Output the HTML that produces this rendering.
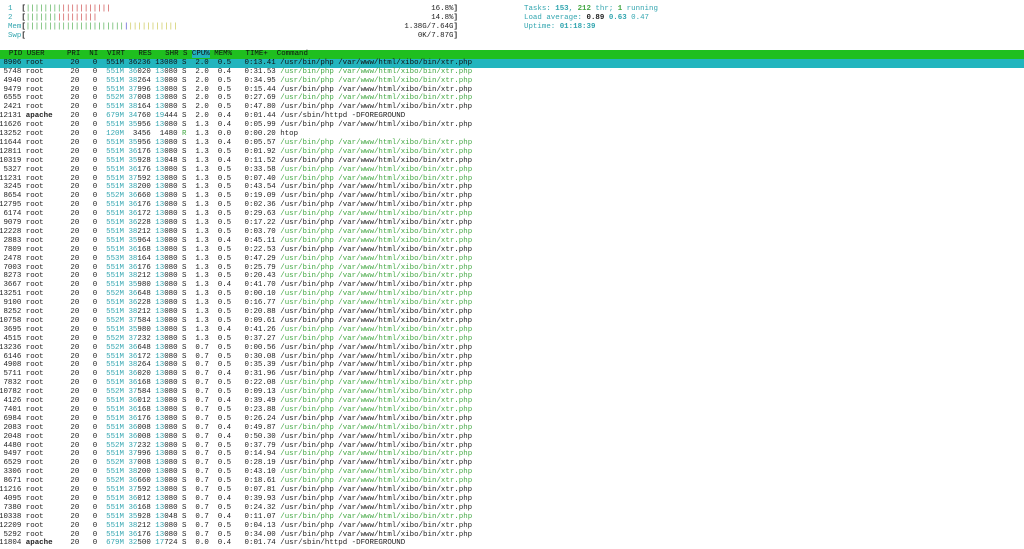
<!DOCTYPE html>
<html><head><meta charset="utf-8"><style>
html,body{margin:0;padding:0;background:#fff;width:1024px;height:549px;overflow:hidden}
body{font-family:"Liberation Mono",monospace;font-size:7.45px;color:#222;position:relative}
.l{position:absolute;left:-1px;height:8.91px;line-height:8.91px;white-space:pre;width:1026px}
.c{color:#33a6b0}.g{color:#45a845}.r{color:#c83a3a}.bl{color:#3a3ac8}.y{color:#c8c44a}.b{font-weight:bold}
.m{width:459px}.v{float:right}
.hd{background:#1fbf1f;color:#111}.hc{background:#22b3bd}
.sel{background:#22b5be;color:#111}
#rows .l{}
</style></head><body>
<div class="l m" style="top:5.4px">  <span class="c">1</span>  <span class="b">[</span><span class="g">||||||||</span><span class="r">|||||||||||</span><span class="v">16.8%<span class="b">]</span></span></div>
<div class="l m" style="top:14.3px">  <span class="c">2</span>  <span class="b">[</span><span class="g">|||||||</span><span class="r">|||||||||</span><span class="v">14.8%<span class="b">]</span></span></div>
<div class="l m" style="top:23.2px">  <span class="c">Mem</span><span class="b">[</span><span class="g">||||||||||||||||||||||</span><span class="bl">|</span><span class="y">|||||||||||</span><span class="v">1.38G/7.64G<span class="b">]</span></span></div>
<div class="l m" style="top:32.1px">  <span class="c">Swp</span><span class="b">[</span><span class="v">0K/7.87G<span class="b">]</span></span></div>
<div class="l" style="top:5.4px;left:524px;width:400px"><span class="c">Tasks: </span><span class="c b">153</span><span class="c">, </span><span class="g b">212</span><span class="c"> thr; </span><span class="g b">1</span><span class="c"> running</span></div>
<div class="l" style="top:14.3px;left:524px;width:400px"><span class="c">Load average: </span><span class="b">0.89 </span><span class="c b">0.63 </span><span class="c">0.47</span></div>
<div class="l" style="top:23.2px;left:524px;width:400px"><span class="c">Uptime: </span><span class="c b">01:18:39</span></div>
<div class="l hd" style="top:49.9px;left:0">  PID USER     PRI  NI  VIRT   RES   SHR S <span class="hc">CPU%</span> MEM%   TIME+  Command</div>
<div id="rows">
<div class="l sel" style="top:58.8px"> 8906 root      20   0  551M 36236 13080 S  2.0  0.5   0:13.41 /usr/bin/php /var/www/html/xibo/bin/xtr.php</div>
<div class="l" style="top:67.7px"> 5748 root      20   0  <span class="c">551M</span> <span class="c">36</span>020 <span class="c">13</span>080 S  2.0  0.4   0:31.53 <span class="g">/usr/bin/php /var/www/html/xibo/bin/xtr.php</span></div>
<div class="l" style="top:76.6px"> 4940 root      20   0  <span class="c">551M</span> <span class="c">38</span>264 <span class="c">13</span>080 S  2.0  0.5   0:34.95 <span class="g">/usr/bin/php /var/www/html/xibo/bin/xtr.php</span></div>
<div class="l" style="top:85.5px"> 9479 root      20   0  <span class="c">551M</span> <span class="c">37</span>996 <span class="c">13</span>080 S  2.0  0.5   0:15.44 /usr/bin/php /var/www/html/xibo/bin/xtr.php</div>
<div class="l" style="top:94.4px"> 6555 root      20   0  <span class="c">552M</span> <span class="c">37</span>008 <span class="c">13</span>080 S  2.0  0.5   0:27.69 <span class="g">/usr/bin/php /var/www/html/xibo/bin/xtr.php</span></div>
<div class="l" style="top:103.3px"> 2421 root      20   0  <span class="c">551M</span> <span class="c">38</span>164 <span class="c">13</span>080 S  2.0  0.5   0:47.80 /usr/bin/php /var/www/html/xibo/bin/xtr.php</div>
<div class="l" style="top:112.2px">12131 <span class="b">apache</span>    20   0  <span class="c">679M</span> <span class="c">34</span>760 <span class="c">19</span>444 S  2.0  0.4   0:01.44 /usr/sbin/httpd -DFOREGROUND</div>
<div class="l" style="top:121.1px">11626 root      20   0  <span class="c">551M</span> <span class="c">35</span>956 <span class="c">13</span>080 S  1.3  0.4   0:05.99 /usr/bin/php /var/www/html/xibo/bin/xtr.php</div>
<div class="l" style="top:130.0px">13252 root      20   0  <span class="c">120M</span>  3456  1480 <span class="g">R</span>  1.3  0.0   0:00.20 htop</div>
<div class="l" style="top:138.9px">11644 root      20   0  <span class="c">551M</span> <span class="c">35</span>956 <span class="c">13</span>080 S  1.3  0.4   0:05.57 <span class="g">/usr/bin/php /var/www/html/xibo/bin/xtr.php</span></div>
<div class="l" style="top:147.8px">12811 root      20   0  <span class="c">551M</span> <span class="c">36</span>176 <span class="c">13</span>080 S  1.3  0.5   0:01.92 <span class="g">/usr/bin/php /var/www/html/xibo/bin/xtr.php</span></div>
<div class="l" style="top:156.7px">10319 root      20   0  <span class="c">551M</span> <span class="c">35</span>928 <span class="c">13</span>048 S  1.3  0.4   0:11.52 /usr/bin/php /var/www/html/xibo/bin/xtr.php</div>
<div class="l" style="top:165.6px"> 5327 root      20   0  <span class="c">551M</span> <span class="c">36</span>176 <span class="c">13</span>080 S  1.3  0.5   0:33.58 <span class="g">/usr/bin/php /var/www/html/xibo/bin/xtr.php</span></div>
<div class="l" style="top:174.5px">11231 root      20   0  <span class="c">551M</span> <span class="c">37</span>592 <span class="c">13</span>080 S  1.3  0.5   0:07.40 <span class="g">/usr/bin/php /var/www/html/xibo/bin/xtr.php</span></div>
<div class="l" style="top:183.4px"> 3245 root      20   0  <span class="c">551M</span> <span class="c">38</span>200 <span class="c">13</span>080 S  1.3  0.5   0:43.54 /usr/bin/php /var/www/html/xibo/bin/xtr.php</div>
<div class="l" style="top:192.3px"> 8654 root      20   0  <span class="c">552M</span> <span class="c">36</span>660 <span class="c">13</span>080 S  1.3  0.5   0:19.09 /usr/bin/php /var/www/html/xibo/bin/xtr.php</div>
<div class="l" style="top:201.2px">12795 root      20   0  <span class="c">551M</span> <span class="c">36</span>176 <span class="c">13</span>080 S  1.3  0.5   0:02.36 /usr/bin/php /var/www/html/xibo/bin/xtr.php</div>
<div class="l" style="top:210.1px"> 6174 root      20   0  <span class="c">551M</span> <span class="c">36</span>172 <span class="c">13</span>080 S  1.3  0.5   0:29.63 <span class="g">/usr/bin/php /var/www/html/xibo/bin/xtr.php</span></div>
<div class="l" style="top:219.0px"> 9079 root      20   0  <span class="c">551M</span> <span class="c">36</span>228 <span class="c">13</span>080 S  1.3  0.5   0:17.22 /usr/bin/php /var/www/html/xibo/bin/xtr.php</div>
<div class="l" style="top:227.9px">12228 root      20   0  <span class="c">551M</span> <span class="c">38</span>212 <span class="c">13</span>080 S  1.3  0.5   0:03.70 <span class="g">/usr/bin/php /var/www/html/xibo/bin/xtr.php</span></div>
<div class="l" style="top:236.8px"> 2883 root      20   0  <span class="c">551M</span> <span class="c">35</span>964 <span class="c">13</span>080 S  1.3  0.4   0:45.11 <span class="g">/usr/bin/php /var/www/html/xibo/bin/xtr.php</span></div>
<div class="l" style="top:245.7px"> 7809 root      20   0  <span class="c">551M</span> <span class="c">36</span>168 <span class="c">13</span>080 S  1.3  0.5   0:22.53 /usr/bin/php /var/www/html/xibo/bin/xtr.php</div>
<div class="l" style="top:254.6px"> 2478 root      20   0  <span class="c">553M</span> <span class="c">38</span>164 <span class="c">13</span>080 S  1.3  0.5   0:47.29 <span class="g">/usr/bin/php /var/www/html/xibo/bin/xtr.php</span></div>
<div class="l" style="top:263.5px"> 7003 root      20   0  <span class="c">551M</span> <span class="c">36</span>176 <span class="c">13</span>080 S  1.3  0.5   0:25.79 <span class="g">/usr/bin/php /var/www/html/xibo/bin/xtr.php</span></div>
<div class="l" style="top:272.4px"> 8273 root      20   0  <span class="c">551M</span> <span class="c">38</span>212 <span class="c">13</span>080 S  1.3  0.5   0:20.43 <span class="g">/usr/bin/php /var/www/html/xibo/bin/xtr.php</span></div>
<div class="l" style="top:281.3px"> 3667 root      20   0  <span class="c">551M</span> <span class="c">35</span>980 <span class="c">13</span>080 S  1.3  0.4   0:41.70 /usr/bin/php /var/www/html/xibo/bin/xtr.php</div>
<div class="l" style="top:290.2px">13251 root      20   0  <span class="c">552M</span> <span class="c">36</span>648 <span class="c">13</span>080 S  1.3  0.5   0:00.10 <span class="g">/usr/bin/php /var/www/html/xibo/bin/xtr.php</span></div>
<div class="l" style="top:299.1px"> 9100 root      20   0  <span class="c">551M</span> <span class="c">36</span>228 <span class="c">13</span>080 S  1.3  0.5   0:16.77 <span class="g">/usr/bin/php /var/www/html/xibo/bin/xtr.php</span></div>
<div class="l" style="top:308.0px"> 8252 root      20   0  <span class="c">551M</span> <span class="c">38</span>212 <span class="c">13</span>080 S  1.3  0.5   0:20.88 /usr/bin/php /var/www/html/xibo/bin/xtr.php</div>
<div class="l" style="top:316.9px">10758 root      20   0  <span class="c">552M</span> <span class="c">37</span>584 <span class="c">13</span>080 S  1.3  0.5   0:09.61 /usr/bin/php /var/www/html/xibo/bin/xtr.php</div>
<div class="l" style="top:325.8px"> 3695 root      20   0  <span class="c">551M</span> <span class="c">35</span>980 <span class="c">13</span>080 S  1.3  0.4   0:41.26 <span class="g">/usr/bin/php /var/www/html/xibo/bin/xtr.php</span></div>
<div class="l" style="top:334.7px"> 4515 root      20   0  <span class="c">552M</span> <span class="c">37</span>232 <span class="c">13</span>080 S  1.3  0.5   0:37.27 <span class="g">/usr/bin/php /var/www/html/xibo/bin/xtr.php</span></div>
<div class="l" style="top:343.6px">13236 root      20   0  <span class="c">552M</span> <span class="c">36</span>648 <span class="c">13</span>080 S  0.7  0.5   0:00.56 /usr/bin/php /var/www/html/xibo/bin/xtr.php</div>
<div class="l" style="top:352.5px"> 6146 root      20   0  <span class="c">551M</span> <span class="c">36</span>172 <span class="c">13</span>080 S  0.7  0.5   0:30.08 /usr/bin/php /var/www/html/xibo/bin/xtr.php</div>
<div class="l" style="top:361.4px"> 4908 root      20   0  <span class="c">551M</span> <span class="c">38</span>264 <span class="c">13</span>080 S  0.7  0.5   0:35.39 /usr/bin/php /var/www/html/xibo/bin/xtr.php</div>
<div class="l" style="top:370.3px"> 5711 root      20   0  <span class="c">551M</span> <span class="c">36</span>020 <span class="c">13</span>080 S  0.7  0.4   0:31.96 /usr/bin/php /var/www/html/xibo/bin/xtr.php</div>
<div class="l" style="top:379.2px"> 7832 root      20   0  <span class="c">551M</span> <span class="c">36</span>168 <span class="c">13</span>080 S  0.7  0.5   0:22.08 <span class="g">/usr/bin/php /var/www/html/xibo/bin/xtr.php</span></div>
<div class="l" style="top:388.1px">10782 root      20   0  <span class="c">552M</span> <span class="c">37</span>584 <span class="c">13</span>080 S  0.7  0.5   0:09.13 <span class="g">/usr/bin/php /var/www/html/xibo/bin/xtr.php</span></div>
<div class="l" style="top:397.0px"> 4126 root      20   0  <span class="c">551M</span> <span class="c">36</span>012 <span class="c">13</span>080 S  0.7  0.4   0:39.49 <span class="g">/usr/bin/php /var/www/html/xibo/bin/xtr.php</span></div>
<div class="l" style="top:405.9px"> 7401 root      20   0  <span class="c">551M</span> <span class="c">36</span>168 <span class="c">13</span>080 S  0.7  0.5   0:23.88 <span class="g">/usr/bin/php /var/www/html/xibo/bin/xtr.php</span></div>
<div class="l" style="top:414.8px"> 6984 root      20   0  <span class="c">551M</span> <span class="c">36</span>176 <span class="c">13</span>080 S  0.7  0.5   0:26.24 /usr/bin/php /var/www/html/xibo/bin/xtr.php</div>
<div class="l" style="top:423.7px"> 2083 root      20   0  <span class="c">551M</span> <span class="c">36</span>008 <span class="c">13</span>080 S  0.7  0.4   0:49.87 <span class="g">/usr/bin/php /var/www/html/xibo/bin/xtr.php</span></div>
<div class="l" style="top:432.6px"> 2048 root      20   0  <span class="c">551M</span> <span class="c">36</span>008 <span class="c">13</span>080 S  0.7  0.4   0:50.30 /usr/bin/php /var/www/html/xibo/bin/xtr.php</div>
<div class="l" style="top:441.5px"> 4480 root      20   0  <span class="c">552M</span> <span class="c">37</span>232 <span class="c">13</span>080 S  0.7  0.5   0:37.79 /usr/bin/php /var/www/html/xibo/bin/xtr.php</div>
<div class="l" style="top:450.4px"> 9497 root      20   0  <span class="c">551M</span> <span class="c">37</span>996 <span class="c">13</span>080 S  0.7  0.5   0:14.94 <span class="g">/usr/bin/php /var/www/html/xibo/bin/xtr.php</span></div>
<div class="l" style="top:459.3px"> 6529 root      20   0  <span class="c">552M</span> <span class="c">37</span>008 <span class="c">13</span>080 S  0.7  0.5   0:28.19 /usr/bin/php /var/www/html/xibo/bin/xtr.php</div>
<div class="l" style="top:468.2px"> 3306 root      20   0  <span class="c">551M</span> <span class="c">38</span>200 <span class="c">13</span>080 S  0.7  0.5   0:43.10 <span class="g">/usr/bin/php /var/www/html/xibo/bin/xtr.php</span></div>
<div class="l" style="top:477.1px"> 8671 root      20   0  <span class="c">552M</span> <span class="c">36</span>660 <span class="c">13</span>080 S  0.7  0.5   0:18.61 <span class="g">/usr/bin/php /var/www/html/xibo/bin/xtr.php</span></div>
<div class="l" style="top:486.0px">11216 root      20   0  <span class="c">551M</span> <span class="c">37</span>592 <span class="c">13</span>080 S  0.7  0.5   0:07.81 /usr/bin/php /var/www/html/xibo/bin/xtr.php</div>
<div class="l" style="top:494.9px"> 4095 root      20   0  <span class="c">551M</span> <span class="c">36</span>012 <span class="c">13</span>080 S  0.7  0.4   0:39.93 /usr/bin/php /var/www/html/xibo/bin/xtr.php</div>
<div class="l" style="top:503.8px"> 7380 root      20   0  <span class="c">551M</span> <span class="c">36</span>168 <span class="c">13</span>080 S  0.7  0.5   0:24.32 /usr/bin/php /var/www/html/xibo/bin/xtr.php</div>
<div class="l" style="top:512.7px">10338 root      20   0  <span class="c">551M</span> <span class="c">35</span>928 <span class="c">13</span>048 S  0.7  0.4   0:11.07 <span class="g">/usr/bin/php /var/www/html/xibo/bin/xtr.php</span></div>
<div class="l" style="top:521.6px">12209 root      20   0  <span class="c">551M</span> <span class="c">38</span>212 <span class="c">13</span>080 S  0.7  0.5   0:04.13 /usr/bin/php /var/www/html/xibo/bin/xtr.php</div>
<div class="l" style="top:530.5px"> 5292 root      20   0  <span class="c">551M</span> <span class="c">36</span>176 <span class="c">13</span>080 S  0.7  0.5   0:34.00 /usr/bin/php /var/www/html/xibo/bin/xtr.php</div>
<div class="l" style="top:539.4px">11804 <span class="b">apache</span>    20   0  <span class="c">679M</span> <span class="c">32</span>500 <span class="c">17</span>724 S  0.0  0.4   0:01.74 /usr/sbin/httpd -DFOREGROUND</div>
</div>
</body></html>
